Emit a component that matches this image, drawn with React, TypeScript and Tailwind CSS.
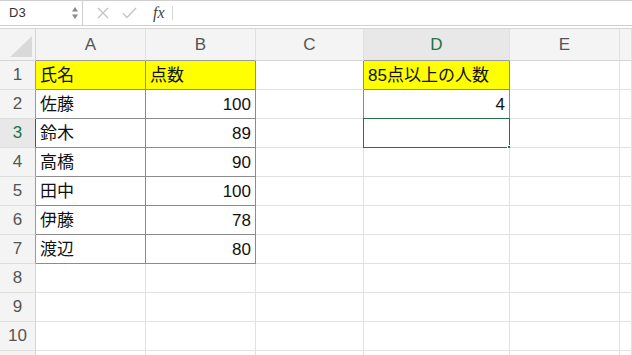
import React from "react";

const font = { fontFamily: '"Liberation Sans", "Noto Sans CJK JP", sans-serif' };

type Cell = { text?: string; right?: boolean; yellow?: boolean; rb?: boolean; bb?: boolean; sel?: boolean };

const cols = ["A", "B", "C", "D", "E", ""];

function buildRow(r: number): Cell[] {
  const names = ["氏名", "佐藤", "鈴木", "高橋", "田中", "伊藤", "渡辺"];
  const scores = ["点数", "100", "89", "90", "100", "78", "80"];
  const row: Cell[] = [{}, {}, {}, {}, {}, {}];
  if (r <= 7) {
    row[0] = { text: names[r - 1], yellow: r === 1, rb: true, bb: true };
    row[1] = { text: scores[r - 1], right: r !== 1, yellow: r === 1, rb: true, bb: true };
  }
  if (r === 1) {
    row[2] = { rb: true };
    row[3] = { text: "85点以上の人数", yellow: true, rb: true, bb: true };
  }
  if (r === 2) {
    row[2] = { rb: true };
    row[3] = { text: "4", right: true, rb: true, bb: true };
  }
  if (r === 3) {
    row[3] = { sel: true };
  }
  return row;
}

export default function App() {
  const rows = Array.from({ length: 11 }, (_, i) => i + 1);
  return (
    <div className="w-[632px] h-[355px] overflow-hidden bg-white text-[#222]" style={font}>
      {/* Formula bar */}
      <div className="h-[26px] flex items-stretch border-t border-b border-[#cfcfcf] bg-white">
        <div className="w-[83px] flex items-center justify-between pl-[9px] pr-[3px] border-r border-[#cfcfcf]">
          <span className="text-[13px] text-[#333]">D3</span>
          <svg width="8" height="16" viewBox="0 0 8 16">
            <path d="M4 2 L7 6.5 L1 6.5 Z" fill="#8a8a8a" />
            <path d="M4 14 L7 9.5 L1 9.5 Z" fill="#8a8a8a" />
          </svg>
        </div>
        <div className="flex items-center pl-[14px]">
          <svg width="12" height="12" viewBox="0 0 12 12" className="mr-[13px]">
            <path d="M1 1 L11 11 M11 1 L1 11" stroke="#c4c4c4" strokeWidth="1.4" />
          </svg>
          <svg width="15" height="12" viewBox="0 0 15 12" className="mr-[16px]">
            <path d="M1 6.5 L5 10.5 L14 1" stroke="#c4c4c4" strokeWidth="1.4" fill="none" />
          </svg>
          <span className="text-[16px] italic text-[#444] mr-[7px]" style={{ fontFamily: '"Liberation Serif", serif' }}>
            fx
          </span>
          <div className="w-px h-[14px] bg-[#d8d8d8]" />
        </div>
      </div>
      <div className="h-[3px] border-b border-[#d6d6d6]" />
      {/* Grid */}
      <div className="grid grid-cols-[36px_110px_110px_108px_146px_110px_1fr] grid-rows-[32px_repeat(11,29px)]">
        {/* Header row */}
        <div className="relative bg-[#f4f4f4] border-r border-b border-[#d4d4d4]">
          <svg width="36" height="31" viewBox="0 0 36 31" className="absolute inset-0">
            <path d="M32 7 L32 28 L10 28 Z" fill="#d9d9d9" />
          </svg>
        </div>
        {cols.map((c, i) => (
          <div
            key={c + i}
            className={`flex items-center justify-center text-[17px] border-r border-b ${
              c === "D" ? "bg-[#e8e8e8] text-[#217346]" : "bg-[#f4f4f4] text-[#555]"
            } ${c === "A" || c === "B" || c === "D" ? "border-b-[#9a9a9a]" : "border-b-[#d4d4d4]"} border-r-[#e0e0e0]`}
          >
            {c}
          </div>
        ))}
        {rows.map((r) => {
          const cells = buildRow(r);
          return (
            <React.Fragment key={r}>
              <div
                className={`flex items-center justify-center text-[17px] border-b border-b-[#dedede] border-r ${
                  r === 3
                    ? "bg-[#e8e8e8] text-[#217346] border-r-[#217346]"
                    : "bg-[#f4f4f4] text-[#555] " + (r <= 7 ? "border-r-[#9a9a9a]" : "border-r-[#d4d4d4]")
                }`}
              >
                {r <= 10 ? r : ""}
              </div>
              {cells.map((cell, ci) => (
                <div
                  key={ci}
                  className={`relative flex items-center px-[4px] text-[17px] text-[#111] border-r border-b ${
                    cell.right ? "justify-end" : "justify-start"
                  } ${cell.yellow ? "bg-[#ffff00]" : "bg-white"} ${cell.rb ? "border-r-[#8c8c8c]" : "border-r-[#e2e2e2]"} ${
                    cell.bb ? "border-b-[#8c8c8c]" : "border-b-[#e2e2e2]"
                  }`}
                >
                  <span className="whitespace-nowrap leading-none">{cell.text}</span>
                  {cell.sel && (
                    <div className="absolute left-[-1px] top-[-1px] right-[-1px] bottom-[-1px] border border-[#217346]">
                      <div className="absolute right-[-3px] bottom-[-3px] w-[5px] h-[5px] bg-[#217346] border border-white" />
                    </div>
                  )}
                </div>
              ))}
            </React.Fragment>
          );
        })}
      </div>
    </div>
  );
}
